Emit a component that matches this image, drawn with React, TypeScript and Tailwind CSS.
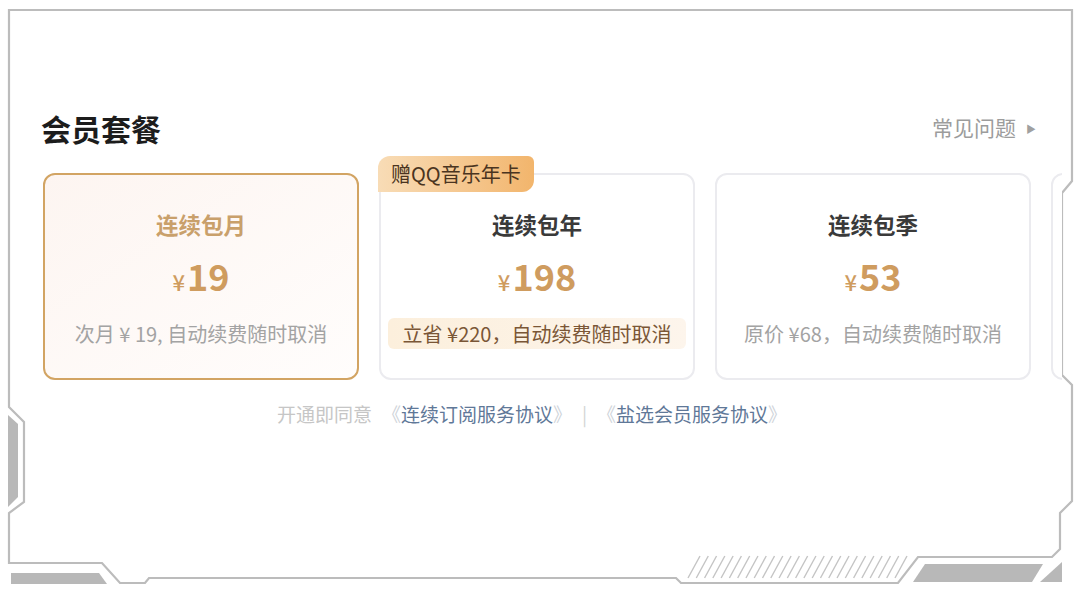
import React from 'react';

type Plan = {
  name: string;
  price: string;
  note: string;
  active?: boolean;
  badge?: string;
  highlight?: boolean;
};

const plans: Plan[] = [
  { name: '连续包月', price: '19', note: '次月 ¥ 19, 自动续费随时取消', active: true },
  { name: '连续包年', price: '198', note: '立省 ¥220，自动续费随时取消', badge: '赠QQ音乐年卡', highlight: true },
  { name: '连续包季', price: '53', note: '原价 ¥68，自动续费随时取消' },
];

// decorative sci-fi frame around the panel
function Frame() {
  const hatches = Array.from({ length: 26 }, (_, i) => 688 + i * 8.28);
  return (
    <svg
      className="absolute inset-0 pointer-events-none"
      width="1080"
      height="596"
      viewBox="0 0 1080 596"
    >
      <polygon points="1072,181 1062,193 1062,375 1072,385 1080,385 1080,181" fill="#ffffff" />
      <path
        d="M149 578 L676 578 L681 583 L898 583 L918 557 L1052 557 L1060 549 L1060 513 L1072 501 L1072 385 L1062 375 L1062 193 L1072 181 L1072 10 L9 10 L9 407 L24 422 L24 502 L9 513 L9 563 L102 563 L120 583 L145 583 L149 578 Z"
        fill="none"
        stroke="#bcbcbc"
        strokeWidth="2.2"
        strokeLinejoin="miter"
      />
      <polygon points="8,415 18,424 18,497 8,507" fill="#b8b8b8" />
      <polygon points="11,573 99,573 107,584 11,584" fill="#b8b8b8" />
      <polygon points="925,564 1043,564 1032,582 913,582" fill="#b8b8b8" />
      <polygon points="1062,562 1062,582 1040,582" fill="#b8b8b8" />
      {hatches.map((x) => (
        <line key={x} x1={x} y1={578} x2={x + 12} y2={556} stroke="#c4c4c4" strokeWidth="1.4" />
      ))}
    </svg>
  );
}

function PlanCard({ plan }: { plan: Plan }) {
  return (
    <div
      className={
        plan.active
          ? 'relative shrink-0 w-[316px] h-[207px] rounded-[12px] border-2 border-[#d2a463] bg-gradient-to-br from-[#fdf5f1] to-[#fffdfc] flex flex-col items-center'
          : 'relative shrink-0 w-[316px] h-[207px] rounded-[12px] border-2 border-[#ebebef] bg-white flex flex-col items-center'
      }
    >
      {plan.badge && (
        <div className="absolute -top-[19px] -left-[3px] h-[36px] px-[13px] flex items-center rounded-tl-[12px] rounded-tr-[6px] rounded-br-[12px] bg-gradient-to-r from-[#f8dcb6] to-[#f2b56c] text-[20px] text-[#4a3420]">
          {plan.badge}
        </div>
      )}
      <div
        className={
          plan.active
            ? 'mt-[34px] h-[30px] leading-[30px] text-[22.5px] font-semibold text-[#c9a06b]'
            : 'mt-[34px] h-[30px] leading-[30px] text-[22.5px] font-semibold text-[#3a3a3a]'
        }
      >
        {plan.name}
      </div>
      <div className="mt-[14px] h-[44px] flex items-baseline text-[#cf9c5f]">
        <span className="text-[22px] font-medium mr-[2px]">¥</span>
        <span className="text-[36px] leading-[44px] font-semibold">{plan.price}</span>
      </div>
      <div
        className={
          plan.highlight
            ? 'mt-[21px] self-stretch mx-[7px] h-[31px] rounded-[6px] bg-gradient-to-r from-[#fcefdc] to-[#fdf5ec] flex items-center justify-center text-[20px] text-[#7a5636]'
            : 'mt-[21px] self-stretch mx-[7px] h-[31px] flex items-center justify-center text-[20px] text-[#a3a3a3]'
        }
      >
        {plan.note}
      </div>
    </div>
  );
}

export default function App() {
  return (
    <div
      className="relative w-[1080px] h-[596px] overflow-hidden bg-white"
      style={{ fontFamily: '"Noto Sans CJK SC", "Noto Sans", sans-serif' }}
    >
      <Frame />

      <div className="relative pt-[108px] pl-[43px]">
        {/* header */}
        <div className="flex items-center justify-between h-[40px] w-[993px]">
          <h2 className="text-[30px] font-bold text-[#1c1c1c] -ml-[2px]">会员套餐</h2>
          <div className="flex items-center text-[21px] text-[#9c9c9c]">
            <span>常见问题</span>
            <span className="ml-[10px] text-[10px] text-[#a0a0a0]">▶</span>
          </div>
        </div>

        {/* plans */}
        <div className="mt-[8px] pt-[17px] w-[1019px] overflow-hidden">
          <div className="flex gap-[20px] pl-[3px] -ml-[3px]">
            {plans.map((p) => (
              <PlanCard key={p.name} plan={p} />
            ))}
            {/* next plan peeking in at the right edge */}
            <div className="shrink-0 w-[316px] h-[207px] rounded-[12px] border-2 border-[#ebebef] bg-white" />
          </div>
        </div>

        {/* agreement */}
        <div className="mt-[21px] w-[978px] flex items-center justify-center text-[19px] leading-[26px]">
          <span className="text-[#c6c6c6]">开通即同意</span>
          <span className="ml-[10px] text-[#cfd4da]">《</span>
          <span className="text-[#5f7898]">连续订阅服务协议</span>
          <span className="text-[#cfd4da]">》</span>
          <span className="mx-[10px] text-[#d4d4d4]">|</span>
          <span className="text-[#cfd4da]">《</span>
          <span className="text-[#5f7898]">盐选会员服务协议</span>
          <span className="text-[#cfd4da]">》</span>
        </div>
      </div>
    </div>
  );
}
